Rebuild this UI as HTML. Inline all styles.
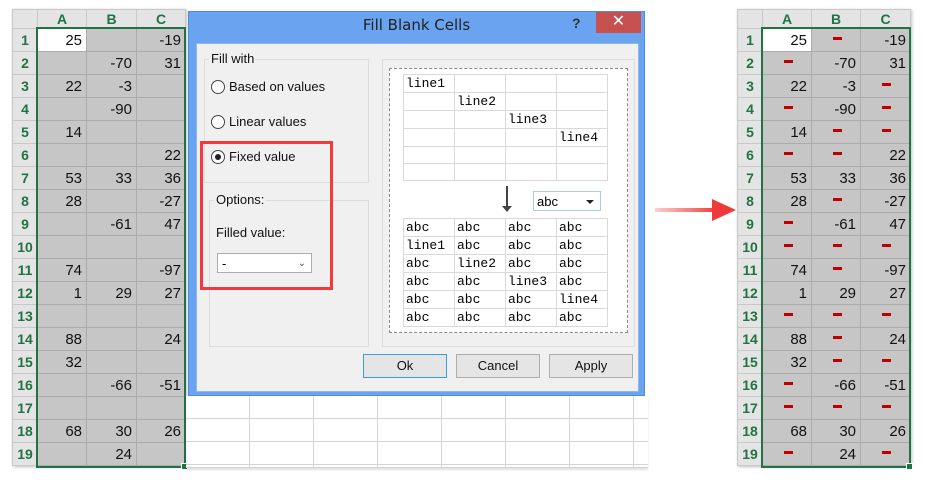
<!DOCTYPE html>
<html><head><meta charset="utf-8"><style>
body{margin:0;width:926px;height:481px;background:#fff;position:relative;overflow:hidden;font-family:"Liberation Sans",sans-serif}
.sheet{position:absolute;top:9px;border-collapse:collapse;table-layout:fixed;font-size:15px;box-shadow:1px 1px 3px rgba(0,0,0,.25)}
.sheet td{border:1px solid #ababab;height:22px;padding:0 4px 0 0;text-align:right;background:#c6c6c6;color:#111;overflow:hidden;white-space:nowrap}
.sheet tr.h td{height:18px;background:#e4e4e4;color:#217346;font-weight:bold;text-align:center;font-size:14px;padding:0;border-color:#c8c8c8}
.sheet td.r{background:#e4e4e4;color:#217346;font-weight:bold;text-align:center;font-size:14px;padding:0;border-color:#c8c8c8}
.sheet td.w{background:#fff}
.sheet td.d{position:relative}
.sheet td.d:after{content:"";position:absolute;left:21px;top:8px;width:9px;height:3px;background:#c00000}
.sel{position:absolute;border:2px solid #217346;box-sizing:border-box}
.sel i{position:absolute;right:-4px;bottom:-4px;width:5px;height:5px;background:#217346;border:1px solid #fff}
.ab{position:absolute}
.dlg{position:absolute;left:188px;top:11px;width:457px;height:385px;background:#6aa4f0;box-sizing:border-box;border:1px solid #4f8de0}
.in{position:absolute;left:7px;top:31px;width:441px;height:347px;background:#f0f0f0;border:1px solid #8fb6ee}
.gb{position:absolute;border:1px solid #dcdcdc}
.lbl{position:absolute;font-size:13px;color:#111;background:#f0f0f0;padding:0 2px;white-space:nowrap}
.rad{position:absolute;width:12px;height:12px;border:1px solid #444;border-radius:50%;background:#fff}
.btn{position:absolute;width:82px;height:22px;border:1px solid #adadad;background:#e5e5e5;text-align:center;font-size:13px;line-height:22px;color:#111}
.mt{position:absolute;border-collapse:collapse;font-family:"Liberation Mono","DejaVu Sans Mono",monospace;font-size:13px;background:#fff}
.mt td{border:1px solid #d9d9d9;width:51px;height:17px;padding:0 0 0 2px;line-height:17px;box-sizing:border-box}
</style></head><body>

<table class="sheet" style="left:12px;width:173px">
<colgroup><col style="width:25px"><col style="width:49px"><col style="width:50px"><col style="width:49px"></colgroup>
<tr class="h"><td></td><td>A</td><td>B</td><td>C</td></tr>
<tr><td class="r">1</td><td class="w">25</td><td></td><td>-19</td></tr>
<tr><td class="r">2</td><td></td><td>-70</td><td>31</td></tr>
<tr><td class="r">3</td><td>22</td><td>-3</td><td></td></tr>
<tr><td class="r">4</td><td></td><td>-90</td><td></td></tr>
<tr><td class="r">5</td><td>14</td><td></td><td></td></tr>
<tr><td class="r">6</td><td></td><td></td><td>22</td></tr>
<tr><td class="r">7</td><td>53</td><td>33</td><td>36</td></tr>
<tr><td class="r">8</td><td>28</td><td></td><td>-27</td></tr>
<tr><td class="r">9</td><td></td><td>-61</td><td>47</td></tr>
<tr><td class="r">10</td><td></td><td></td><td></td></tr>
<tr><td class="r">11</td><td>74</td><td></td><td>-97</td></tr>
<tr><td class="r">12</td><td>1</td><td>29</td><td>27</td></tr>
<tr><td class="r">13</td><td></td><td></td><td></td></tr>
<tr><td class="r">14</td><td>88</td><td></td><td>24</td></tr>
<tr><td class="r">15</td><td>32</td><td></td><td></td></tr>
<tr><td class="r">16</td><td></td><td>-66</td><td>-51</td></tr>
<tr><td class="r">17</td><td></td><td></td><td></td></tr>
<tr><td class="r">18</td><td>68</td><td>30</td><td>26</td></tr>
<tr><td class="r">19</td><td></td><td>24</td><td></td></tr>
</table>
<div class="sel" style="left:36px;top:27px;width:150px;height:441px"><i></i></div>

<!-- grid below dialog -->
<div class="ab" style="left:186px;top:396px;width:462px;height:71px;background:#fff;
background-image:linear-gradient(#d4d4d4 1px,transparent 1px),linear-gradient(90deg,#d4d4d4 1px,transparent 1px);background-size:64px 23px,64px 23px;background-position:0 -1px,-1px 0;border-bottom:1px solid #d4d4d4;box-shadow:0 2px 2px rgba(0,0,0,.12)"></div>

<div class="dlg">
<div class="ab" style="left:0;top:4px;width:100%;text-align:center;font-size:15px;color:#222;font-family:'DejaVu Sans',sans-serif">Fill Blank Cells</div>
<div class="ab" style="left:383px;top:3px;font-size:14px;font-weight:bold;color:#333">?</div>
<div class="ab" style="left:407px;top:0;width:45px;height:21px;background:#c75050;color:#fff;text-align:center;font-size:16px;line-height:20px">✕</div>
<div class="in">
 <div class="gb" style="left:7px;top:15px;width:163px;height:122px"></div>
 <div class="lbl" style="left:12px;top:7px">Fill with</div>
 <div class="rad" style="left:14px;top:36px"></div><div class="lbl" style="left:30px;top:35px">Based on values</div>
 <div class="rad" style="left:14px;top:71px"></div><div class="lbl" style="left:30px;top:70px">Linear values</div>
 <div class="rad" style="left:14px;top:106px"></div><div class="ab" style="left:18px;top:110px;width:6px;height:6px;border-radius:50%;background:#222"></div><div class="lbl" style="left:30px;top:105px">Fixed value</div>
 <div class="gb" style="left:12px;top:156px;width:158px;height:145px"></div>
 <div class="lbl" style="left:17px;top:148px">Options:</div>
 <div class="lbl" style="left:17px;top:181px">Filled value:</div>
 <div class="ab" style="left:20px;top:209px;width:95px;height:20px;border:1px solid #abadb3;background:#fff;font-size:13px;line-height:19px;padding-left:4px;box-sizing:border-box">-<span style="position:absolute;right:5px;top:0;color:#555;font-size:10px">&#8964;</span></div>
 <div class="ab" style="left:3px;top:97px;width:127px;height:143px;border:3px solid #f23a3a"></div>

 <div class="gb" style="left:185px;top:15px;width:251px;height:286px"></div>
 <div class="ab" style="left:192px;top:24px;width:237px;height:263px;border:1px dashed #888;background:#fff"></div>
 <table class="mt" style="left:206px;top:30px">
 <tr><td>line1</td><td></td><td></td><td></td></tr>
 <tr><td></td><td>line2</td><td></td><td></td></tr>
 <tr><td></td><td></td><td>line3</td><td></td></tr>
 <tr><td></td><td></td><td></td><td>line4</td></tr>
 <tr><td></td><td></td><td></td><td></td></tr>
 <tr><td></td><td></td><td></td><td></td></tr>
 </table>
 <div class="ab" style="left:309px;top:142px;width:2px;height:22px;background:#444"></div>
 <div class="ab" style="left:305px;top:162px;border-left:5px solid transparent;border-right:5px solid transparent;border-top:6px solid #444"></div>
 <div class="ab" style="left:336px;top:147px;width:68px;height:20px;border:1px solid #a8cbee;background:#fff;font-size:13px;line-height:19px;padding-left:3px;box-sizing:border-box">abc<span style="position:absolute;right:6px;top:8px;border-left:4px solid transparent;border-right:4px solid transparent;border-top:4px solid #222"></span></div>
 <table class="mt" style="left:206px;top:174px">
 <tr><td>abc</td><td>abc</td><td>abc</td><td>abc</td></tr>
 <tr><td>line1</td><td>abc</td><td>abc</td><td>abc</td></tr>
 <tr><td>abc</td><td>line2</td><td>abc</td><td>abc</td></tr>
 <tr><td>abc</td><td>abc</td><td>line3</td><td>abc</td></tr>
 <tr><td>abc</td><td>abc</td><td>abc</td><td>line4</td></tr>
 <tr><td>abc</td><td>abc</td><td>abc</td><td>abc</td></tr>
 </table>
 <div class="btn" style="left:166px;top:310px;border-color:#3c9be8">Ok</div>
 <div class="btn" style="left:259px;top:310px">Cancel</div>
 <div class="btn" style="left:352px;top:310px">Apply</div>
</div>
</div>

<!-- arrow -->
<div class="ab" style="left:655px;top:208px;width:60px;height:4px;background:linear-gradient(90deg,#fbd0d0,#f04040)"></div>
<div class="ab" style="left:712px;top:199px;border-top:11px solid transparent;border-bottom:11px solid transparent;border-left:24px solid #f03a3a"></div>

<table class="sheet" style="left:737px;width:173px">
<colgroup><col style="width:25px"><col style="width:49px"><col style="width:49px"><col style="width:50px"></colgroup>
<tr class="h"><td></td><td>A</td><td>B</td><td>C</td></tr>
<tr><td class="r">1</td><td class="w">25</td><td class="d"></td><td>-19</td></tr>
<tr><td class="r">2</td><td class="d"></td><td>-70</td><td>31</td></tr>
<tr><td class="r">3</td><td>22</td><td>-3</td><td class="d"></td></tr>
<tr><td class="r">4</td><td class="d"></td><td>-90</td><td class="d"></td></tr>
<tr><td class="r">5</td><td>14</td><td class="d"></td><td class="d"></td></tr>
<tr><td class="r">6</td><td class="d"></td><td class="d"></td><td>22</td></tr>
<tr><td class="r">7</td><td>53</td><td>33</td><td>36</td></tr>
<tr><td class="r">8</td><td>28</td><td class="d"></td><td>-27</td></tr>
<tr><td class="r">9</td><td class="d"></td><td>-61</td><td>47</td></tr>
<tr><td class="r">10</td><td class="d"></td><td class="d"></td><td class="d"></td></tr>
<tr><td class="r">11</td><td>74</td><td class="d"></td><td>-97</td></tr>
<tr><td class="r">12</td><td>1</td><td>29</td><td>27</td></tr>
<tr><td class="r">13</td><td class="d"></td><td class="d"></td><td class="d"></td></tr>
<tr><td class="r">14</td><td>88</td><td class="d"></td><td>24</td></tr>
<tr><td class="r">15</td><td>32</td><td class="d"></td><td class="d"></td></tr>
<tr><td class="r">16</td><td class="d"></td><td>-66</td><td>-51</td></tr>
<tr><td class="r">17</td><td class="d"></td><td class="d"></td><td class="d"></td></tr>
<tr><td class="r">18</td><td>68</td><td>30</td><td>26</td></tr>
<tr><td class="r">19</td><td class="d"></td><td>24</td><td class="d"></td></tr>
</table>
<div class="sel" style="left:761px;top:27px;width:150px;height:441px"><i></i></div>
</body></html>
